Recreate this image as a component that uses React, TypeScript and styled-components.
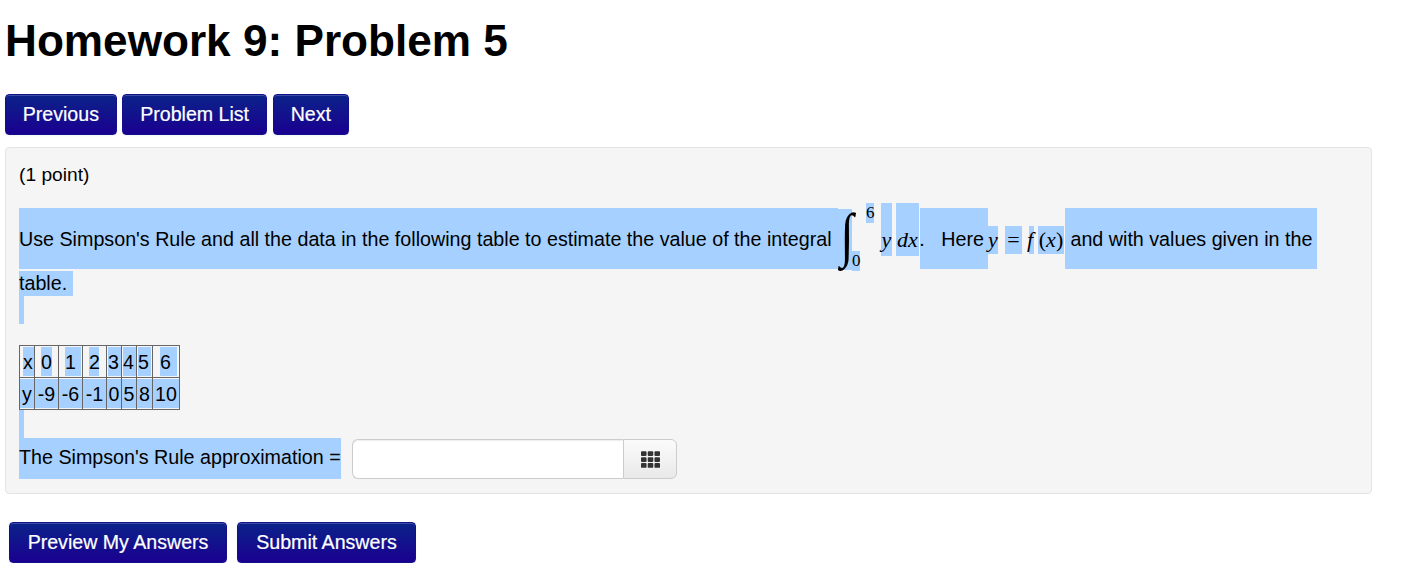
import styled, { createGlobalStyle } from "styled-components";
import { FaTh } from "react-icons/fa";

const GlobalStyle = createGlobalStyle`
    html, body {
        margin: 0;
        padding: 0;
        background: #fff;
        color: #000;
        font-family: "Liberation Sans", Arial, sans-serif;
    }
`;

const Page = styled.div`
    width: 1367px;
    padding: 0 0 0 5px;
`;

const Heading = styled.h1`
    margin: 0;
    height: 94px;
    padding-top: 14px;
    box-sizing: border-box;
    font-size: 44.15px;
    line-height: 54px;
    font-weight: 700;
`;

// nav and submit rows share the same button look
const ButtonRow = styled.div<{ $gap: number; $indent?: number }>`
    display: flex;
    gap: ${(p) => p.$gap}px;
    margin-left: ${(p) => p.$indent ?? 0}px;
`;

const NavButton = styled.button<{ $width: number }>`
    width: ${(p) => p.$width}px;
    height: 41px;
    padding: 0 0 2px;
    border: 1px solid #14108c;
    border-radius: 4px;
    background: linear-gradient(to bottom, #0b2389, #1a0090);
    box-shadow: inset 0 1px 0 rgba(255, 255, 255, 0.2), 0 1px 2px rgba(0, 0, 0, 0.05);
    color: #fff;
    font-family: "Liberation Sans", Arial, sans-serif;
    font-size: 19.6px;
    line-height: 24px;
    -webkit-text-stroke: 0.2px #fff;
`;

const Panel = styled.div`
    box-sizing: border-box;
    width: 1367px;
    height: 347px;
    margin: 12px 0 28px;
    padding: 14px 13px 0;
    background: #f5f5f5;
    border: 1px solid #e4e4e4;
    border-radius: 4px;
    font-size: 19.7px;
    line-height: 25px;
`;

const Points = styled.div`
    height: 46px;
    font-size: 19.2px;
`;

const FormulaLine = styled.div`
    display: flex;
    align-items: flex-start;
    height: 61px;
    white-space: pre;
`;

const Marked = styled.span`
    background: #a6d0ff;
`;

const TextBlock = styled(Marked)<{ $width: number; $left?: number }>`
    display: block;
    flex: none;
    width: ${(p) => p.$width}px;
    height: 61px;
    margin-left: ${(p) => p.$left ?? 0}px;
    line-height: 62px;
`;

// a piece of typeset math, with its own highlight box
const MathBit = styled(Marked)<{ $left: number; $top: number; $width: number; $height: number; $size?: number; $line?: number }>`
    display: block;
    flex: none;
    margin-left: ${(p) => p.$left}px;
    margin-top: ${(p) => p.$top}px;
    width: ${(p) => p.$width}px;
    height: ${(p) => p.$height}px;
    line-height: ${(p) => p.$line ?? p.$height}px;
    text-align: center;
    font-family: "Liberation Serif", "Times New Roman", serif;
    font-size: ${(p) => p.$size ?? 22}px;
`;

const MathItalic = styled.i`
    font-family: "Liberation Serif", "Times New Roman", serif;
`;

const FunctionLetter = styled(MathItalic)`
    display: inline-block;
    margin-left: -3px;
`;

const IntegralSign = styled.span`
    display: block;
    font-size: 46px;
    font-style: italic;
    line-height: 58px;
    transform: translate(2px, -3px) scale(1.05, 1.3);
`;

const SecondLine = styled.div`
    height: 76px;
`;

const TableWord = styled(Marked)`
    display: inline-block;
    width: 54px;
    height: 25px;
    margin-top: 2px;
    line-height: 25px;
    vertical-align: top;
`;

const Sliver = styled(Marked)<{ $height: number }>`
    display: block;
    width: 5px;
    height: ${(p) => p.$height}px;
`;

const DataTable = styled.table`
    box-sizing: border-box;
    border-collapse: collapse;
    table-layout: fixed;
    width: 160px;
    height: 65px;
    border: 1px solid #333;
`;

const Cell = styled.td<{ $width: number }>`
    box-sizing: border-box;
    width: ${(p) => p.$width}px;
    padding: 1px 0;
    border: 1px solid #666;
    text-align: center;
    font-size: 19.6px;
    line-height: 30px;
`;

const CellMark = styled(Marked)`
    display: block;
    height: 29px;
    white-space: nowrap;
`;

// top row highlights only hug the glyph, so they start at their own offset
const HugMark = styled(CellMark)<{ $left: number; $width: number }>`
    width: ${(p) => p.$width}px;
    margin-left: ${(p) => p.$left}px;
    text-align: left;
`;

const AnswerLine = styled.div`
    display: flex;
    align-items: flex-start;
`;

const AnswerLabel = styled(Marked)`
    display: block;
    width: 322px;
    height: 41px;
    line-height: 38px;
    white-space: nowrap;
`;

const AnswerInput = styled.input`
    box-sizing: border-box;
    width: 271px;
    height: 40px;
    margin: 1px 0 0 11px;
    padding: 0 10px;
    background: #fff;
    border: 1px solid #ccc;
    border-right: none;
    border-radius: 6px 0 0 6px;
    box-shadow: inset 0 1px 1px rgba(0, 0, 0, 0.07);
`;

const PickerButton = styled.button`
    box-sizing: border-box;
    display: flex;
    align-items: center;
    justify-content: center;
    width: 54px;
    height: 40px;
    margin-top: 1px;
    padding: 0;
    background: linear-gradient(to bottom, #fbfbfb, #e9e9e9);
    border: 1px solid #ccc;
    border-radius: 0 6px 6px 0;
    color: #333;
    font-size: 19px;
`;

const colWidths = [15, 24, 24, 24, 15, 15, 16, 27];
const topRow = [
    { text: "x", left: 3, width: 12 },
    { text: "0", left: 6, width: 11 },
    { text: "1", left: 6, width: 16 },
    { text: "2", left: 6, width: 10 },
    { text: "3", left: 1, width: 13 },
    { text: "4", left: 1, width: 13 },
    { text: "5", left: 1, width: 13 },
    { text: "6", left: 7, width: 17 },
];
const bottomRow = ["y", "-9", "-6", "-1", "0", "5", "8", "10"];

export default function App() {
    return (
        <Page>
            <GlobalStyle />
            <Heading>Homework 9: Problem 5</Heading>

            <ButtonRow $gap={5.6}>
                <NavButton $width={111.7}>Previous</NavButton>
                <NavButton $width={144.7}>Problem List</NavButton>
                <NavButton $width={76.5}>Next</NavButton>
            </ButtonRow>

            <Panel>
                <Points>(1 point)</Points>

                {/* Sentence with the inline formula */}
                <FormulaLine>
                    <TextBlock $width={819}>Use Simpson's Rule and all the data in the following table to estimate the value of the integral</TextBlock>
                    <MathBit $left={0} $top={1} $width={14} $height={61}><IntegralSign>∫</IntegralSign></MathBit>
                    <MathBit $left={0} $top={43} $width={8} $height={20} $size={17}>0</MathBit>
                    <MathBit $left={6} $top={-5} $width={8} $height={20} $size={17}>6</MathBit>
                    <MathBit $left={7} $top={-5} $width={11} $height={53} $line={74}><MathItalic>y</MathItalic></MathBit>
                    <MathBit $left={4} $top={-5} $width={23} $height={53} $line={74}><MathItalic>dx</MathItalic></MathBit>
                    <TextBlock $width={68} $left={1}>
                        <MathItalic>.</MathItalic>{"   "}Here{" "}
                    </TextBlock>
                    <MathBit $left={0} $top={18} $width={10} $height={28}><MathItalic>y</MathItalic></MathBit>
                    <MathBit $left={7} $top={18} $width={17} $height={28}>=</MathBit>
                    <MathBit $left={7} $top={18} $width={5} $height={28}><FunctionLetter>f</FunctionLetter></MathBit>
                    <MathBit $left={4} $top={18} $width={26} $height={28}>(<MathItalic>x</MathItalic>)</MathBit>
                    <TextBlock $width={252} $left={1}> and with values given in the</TextBlock>
                </FormulaLine>

                <SecondLine>
                    <TableWord>table.</TableWord>
                    <Sliver $height={28} />
                </SecondLine>

                {/* Data table */}
                <DataTable>
                    <tbody>
                        <tr>
                            {topRow.map((c, i) => (
                                <Cell key={i} $width={colWidths[i]}>
                                    <HugMark $left={c.left} $width={c.width}>{c.text}</HugMark>
                                </Cell>
                            ))}
                        </tr>
                        <tr>
                            {bottomRow.map((c, i) => (
                                <Cell key={i} $width={colWidths[i]}>
                                    <CellMark>{c}</CellMark>
                                </Cell>
                            ))}
                        </tr>
                    </tbody>
                </DataTable>

                <Sliver $height={28} />

                {/* Answer entry */}
                <AnswerLine>
                    <AnswerLabel>The Simpson's Rule approximation =</AnswerLabel>
                    <AnswerInput type="text" />
                    <PickerButton><FaTh /></PickerButton>
                </AnswerLine>
            </Panel>

            <ButtonRow $gap={10} $indent={4}>
                <NavButton $width={218}>Preview My Answers</NavButton>
                <NavButton $width={179}>Submit Answers</NavButton>
            </ButtonRow>
        </Page>
    );
}
